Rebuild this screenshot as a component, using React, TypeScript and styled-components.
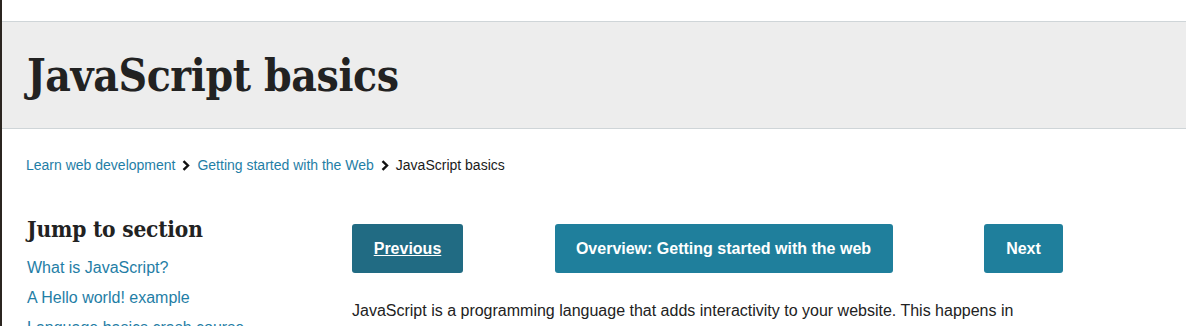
import styled, { createGlobalStyle } from 'styled-components';

const GlobalStyle = createGlobalStyle`
  html, body {
    margin: 0;
    padding: 0;
    background: #fff;
    overflow: hidden;
  }
  body {
    font-family: "Liberation Sans", Arial, sans-serif;
    color: #222;
  }
`;

const Page = styled.div`
  border-left: 2px solid #2b2520;
  min-height: 326px;
  box-sizing: border-box;
  padding-top: 21px;
`;

const TitleBand = styled.header`
  height: 106px;
  background: #ededed;
  border-top: 1px solid #cfd5d8;
  border-bottom: 1px solid #cfd5d8;
  display: flex;
  align-items: center;
  padding-left: 25px;
`;

const Title = styled.h1`
  margin: 0;
  font-family: "DejaVu Serif", serif;
  font-stretch: condensed;
  font-weight: 700;
  font-size: 44px;
  letter-spacing: -0.4px;
  color: #222;
  line-height: 1;
  padding-top: 2px;
`;

const Crumbs = styled.nav`
  display: flex;
  align-items: center;
  gap: 7px;
  padding: 28px 0 0 24px;
  font-size: 14px;
  line-height: 16px;
`;

const Crumb = styled.a<{ current?: boolean }>`
  color: ${(p) => (p.current ? '#1b1b1b' : '#1f7ea6')};
  text-decoration: none;
`;

const Chevron = () => (
  <svg width="8" height="11" viewBox="0 0 8 11">
    <path d="M1.5 1.2 L6 5.5 L1.5 9.8" fill="none" stroke="#111" strokeWidth="2.4" />
  </svg>
);

const Body = styled.div`
  display: flex;
  padding: 43px 0 0 25px;
`;

const Sidebar = styled.aside`
  width: 325px;
  flex-shrink: 0;
`;

const SideTitle = styled.h2`
  margin: 0 0 16px;
  font-family: "DejaVu Serif", serif;
  font-stretch: condensed;
  font-weight: 700;
  font-size: 22.5px;
  letter-spacing: -0.2px;
  line-height: 26px;
  color: #222;
`;

const SideLink = styled.a`
  display: block;
  font-size: 16px;
  line-height: 19px;
  margin-bottom: 11px;
  color: #1f7ea6;
  text-decoration: none;
`;

const Main = styled.main`
  width: 711px;
  padding-top: 8px;
`;

const NavRow = styled.div`
  display: flex;
  justify-content: space-between;
`;

const NavButton = styled.a<{ active?: boolean; w: number }>`
  width: ${(p) => p.w}px;
  height: 49px;
  box-sizing: border-box;
  border-radius: 3px;
  background: ${(p) => (p.active ? '#216b83' : '#1f7f9c')};
  color: #fff;
  font-weight: 700;
  font-size: 16px;
  display: flex;
  align-items: center;
  justify-content: center;
  text-decoration: ${(p) => (p.active ? 'underline' : 'none')};
`;

const Para = styled.p`
  margin: 26px 0 0;
  font-size: 16px;
  line-height: 24px;
  color: #222;
`;

const App = () => {
  return (
    <>
      <GlobalStyle />
      <Page>
        <TitleBand>
          <Title>JavaScript basics</Title>
        </TitleBand>
        <Crumbs>
          <Crumb>Learn web development</Crumb>
          <Chevron />
          <Crumb>Getting started with the Web</Crumb>
          <Chevron />
          <Crumb current>JavaScript basics</Crumb>
        </Crumbs>
        <Body>
          <Sidebar>
            <SideTitle>Jump to section</SideTitle>
            <SideLink>What is JavaScript?</SideLink>
            <SideLink>A Hello world! example</SideLink>
            <SideLink>Language basics crash course</SideLink>
          </Sidebar>
          <Main>
            <NavRow>
              <NavButton active w={111}>Previous</NavButton>
              <NavButton w={338}>Overview: Getting started with the web</NavButton>
              <NavButton w={79}>Next</NavButton>
            </NavRow>
            <Para>
              JavaScript is a programming language that adds interactivity to your website. This happens in
              games, in the behavior of responses when buttons are pressed or with data entry on forms.
            </Para>
          </Main>
        </Body>
      </Page>
    </>
  );
};

export default App;
